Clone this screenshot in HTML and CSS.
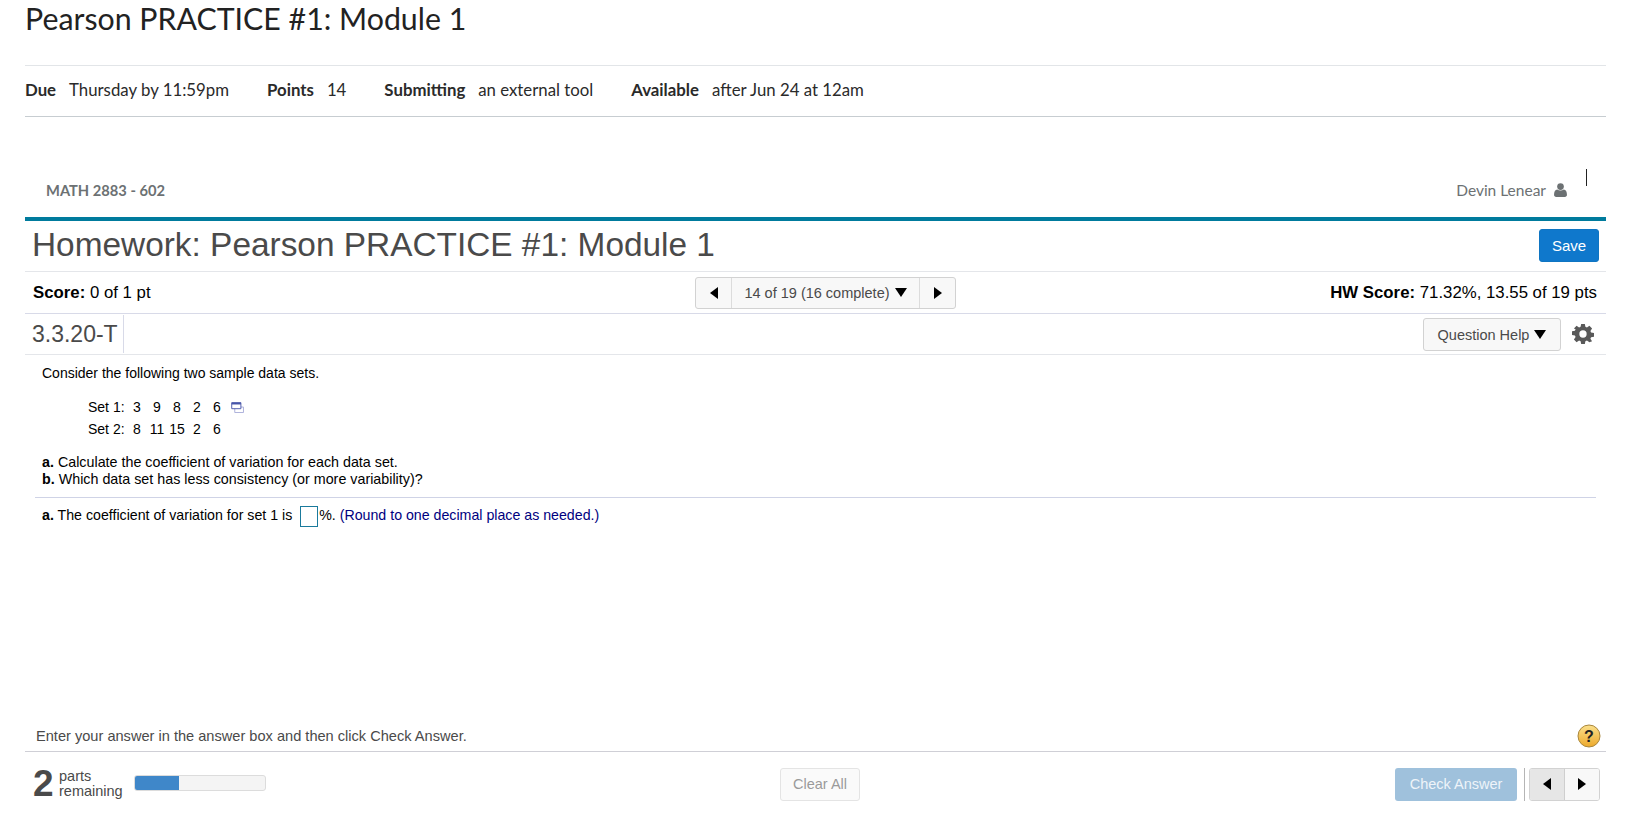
FILE: index.html
```html
<!DOCTYPE html>
<html lang="en">
<head>
<meta charset="utf-8">
<title>Pearson PRACTICE #1: Module 1</title>
<link rel="stylesheet" href="styles.css">
</head>
<body>
<div class="page">
  <h1 class="page-title">Pearson PRACTICE #1: Module 1</h1>
  <ul class="meta">
    <li><b>Due</b><span>Thursday by 11:59pm</span></li>
    <li><b>Points</b><span>14</span></li>
    <li><b>Submitting</b><span>an external tool</span></li>
    <li><b>Available</b><span>after Jun 24 at 12am</span></li>
  </ul>
  <div class="tool">
    <div class="course-row">
      <span class="course">MATH 2883 - 602</span>
      <span class="user">Devin Lenear
        <svg class="user-icon" viewBox="0 0 12 13" aria-hidden="true"><circle cx="6" cy="3.3" r="3.1"/><path d="M0 11c0-3 1-5 3-5 .8.6 1.8 1 3 1s2.200-.4 3-1c2 0 3 2 3 5 0 1.300-.8 2-2 2H2c-1.200 0-2-.7-2-2z"/></svg>
      </span>
      <i class="caret-line"></i>
    </div>
    <div class="hw-row">
      <h2 class="hw-title">Homework: Pearson PRACTICE #1: Module 1</h2>
      <button class="btn-save">Save</button>
    </div>
    <div class="score-row">
      <div class="score"><b>Score:</b> 0 of 1 pt</div>
      <div class="pager">
        <span class="pager-end"><i class="tri-left"></i></span>
        <span class="pager-mid">14 of 19 (16 complete) <i class="tri-down"></i></span>
        <span class="pager-end"><i class="tri-right"></i></span>
      </div>
      <div class="score hw-score"><b>HW Score:</b> 71.32%, 13.55 of 19 pts</div>
    </div>
    <div class="q-row">
      <div class="q-id">3.3.20-T</div>
      <div class="q-tools">
        <button class="btn-help">Question Help <i class="tri-down"></i></button>
        <svg class="gear" viewBox="0 0 24 24" aria-hidden="true"><path fill-rule="evenodd" d="M10 1h4l.6 3.100 1.700.7L19 3l2.900 2.900-1.800 2.700.7 1.700 3.200.7v4l-3.200.6-.7 1.700 1.800 2.700L19 21l-2.700-1.800-1.700.7L14 23h-4l-.6-3.100-1.700-.7L5 21l-2.900-2.900 1.800-2.700-.7-1.700L0 13.100v-4l3.200-.7.7-1.700L2.100 5.900 5 3l2.700 1.800 1.700-.7L10 1zm2 7a4 4 0 1 0 0 8 4 4 0 0 0 0-8z"/></svg>
      </div>
    </div>
    <div class="question">
      <p class="intro">Consider the following two sample data sets.</p>
      <div class="sets">
        <span class="set-label">Set 1:</span><span class="n">3</span><span class="n">9</span><span class="n">8</span><span class="n">2</span><span class="n">6</span>
        <svg class="copy-icon" viewBox="0 0 14 12" aria-hidden="true"><path class="copy-back" d="M4 5.500h9.500v6H4z"/><path class="copy-front" d="M.7.700h10v6.600H.7z"/><path class="copy-bar" d="M.7.700h10v2H.7z"/></svg>
        <span class="set-label">Set 2:</span><span class="n">8</span><span class="n">11</span><span class="n">15</span><span class="n">2</span><span class="n">6</span><span></span>
      </div>
      <p class="parts"><b>a.</b> Calculate the coefficient of variation for each data set.<br><b>b.</b> Which data set has less consistency (or more variability)?</p>
      <div class="answer"><b>a.</b> The coefficient of variation for set 1 is <input class="answer-box" type="text" aria-label="answer">%. <span class="hint">(Round to one decimal place as needed.)</span></div>
    </div>
    <div class="instr-row">
      <span>Enter your answer in the answer box and then click Check Answer.</span>
      <svg class="help-icon" viewBox="0 0 24 24" aria-hidden="true">
        <defs><linearGradient id="gold" x1="0" y1="0" x2="0" y2="1"><stop offset="0" stop-color="#fbe08c"/><stop offset="1" stop-color="#eda92c"/></linearGradient></defs>
        <circle cx="12" cy="12" r="11" fill="url(#gold)" stroke="#a9873d"/>
        <text x="12" y="17.500" text-anchor="middle" class="help-q">?</text>
      </svg>
    </div>
    <div class="action-row">
      <div class="parts-left">
        <span class="big-num">2</span>
        <span class="parts-label">parts<br>remaining</span>
        <span class="progress"><i class="progress-fill"></i></span>
      </div>
      <button class="btn-clear">Clear All</button>
      <div class="actions-right">
        <button class="btn-check">Check Answer</button>
        <i class="sep"></i>
        <div class="nav">
          <span class="nav-prev"><i class="tri-left"></i></span>
          <span class="nav-next"><i class="tri-right"></i></span>
        </div>
      </div>
    </div>
  </div>
</div>
</body>
</html>
```
FILE: styles.css
```css
* { box-sizing: border-box; }
html, body { margin: 0; padding: 0; background: #fff; }
body { font-family: "Liberation Sans", Arial, sans-serif; color: #000; }
.page { width: 1635px; height: 816px; padding: 0 29px 0 25px; overflow: hidden; display: flex; flex-direction: column; }

.page-title { margin: 0; height: 65px; font: 400 30.300px/37px Lato, sans-serif; color: #222; }
.meta { list-style: none; margin: 0; padding: 0 0 2px; height: 52px; display: flex; align-items: center; gap: 38px; border-top: 1px solid #e2e5e8; border-bottom: 1px solid #c7cdd1; font: 400 16.800px/20px Lato, sans-serif; color: #2a2a2a; }
.meta b { font-weight: 700; margin-right: 13px; }

.tool { flex: 1; display: flex; flex-direction: column; min-height: 0; }
.course-row { position: relative; height: 104px; flex: none; display: flex; align-items: flex-end; justify-content: space-between; padding: 0 39px 18px 21px; border-bottom: 4px solid #007b9d; font-family: Lato, sans-serif; color: #6c7173; }
.course { font-size: 14.700px; font-weight: 700; line-height: 18px; }
.user { font-size: 15.500px; line-height: 18px; display: flex; align-items: center; gap: 8px; }
.user-icon { width: 13px; height: 14px; fill: #6c7173; }
.caret-line { position: absolute; right: 19px; top: 52px; width: 1px; height: 17px; background: #222; }

.hw-row { height: 51px; flex: none; display: flex; align-items: center; justify-content: space-between; padding: 0 7px 0 7px; border-bottom: 1px solid #e4e6ea; }
.hw-title { margin: 0 0 3px; font: 400 33.400px/44px "Liberation Sans", Arial, sans-serif; color: #4a4a4a; }
.btn-save { width: 60px; height: 33px; margin-top: -1px; padding: 0; border: 1px solid #0f75c2; border-radius: 3px; background: #0f78cc; color: #fff; font: 400 15px "Liberation Sans", Arial, sans-serif; }

.score-row { height: 42px; flex: none; display: grid; grid-template-columns: 1fr auto 1fr; align-items: center; padding: 0 9px 0 8px; border-bottom: 1px solid #d8dae8; font-size: 16.800px; }
.hw-score { text-align: right; }
.pager { display: flex; height: 32px; margin-left: 21px; border: 1px solid #d2d2d2; border-radius: 3px; background: #f8f8f8; color: #4a4a4a; font-size: 14.500px; }
.pager-end { width: 35px; display: flex; align-items: center; justify-content: center; }
.pager-mid { width: 189px; display: flex; align-items: center; justify-content: center; gap: 5px; border: solid #dcdcdc; border-width: 0 1px; }

.tri-left, .tri-right { display: block; width: 0; height: 0; border-style: solid; border-color: transparent #000; }
.tri-left { border-width: 6px 8px 6px 0; }
.tri-right { border-width: 6px 0 6px 8px; }
.tri-down { display: inline-block; width: 0; height: 0; border-style: solid; border-color: #000 transparent transparent; border-width: 9px 6.500px 0; }

.q-row { height: 41px; flex: none; display: flex; align-items: stretch; justify-content: space-between; border-bottom: 1px solid #e4e6ea; padding: 1px 12px 0 0; }
.q-id { width: 99px; padding-left: 7px; margin-bottom: 1px; border-right: 1px solid #d8dae8; font-size: 23px; line-height: 38px; color: #4a4a4a; white-space: nowrap; }
.q-tools { display: flex; align-items: center; gap: 11px; margin-top: -1px; }
.btn-help { width: 138px; height: 33px; margin-top: 1px; display: flex; align-items: center; justify-content: center; gap: 5px; padding: 0; border: 1px solid #d2d2d2; border-radius: 3px; background: #f8f8f8; color: #4a4a4a; font: 400 14.500px "Liberation Sans", Arial, sans-serif; }
.gear { width: 22px; height: 22px; fill: #595959; }

.question { flex: 1; padding: 0 10px 0 17px; font-size: 14px; line-height: 17px; }
.intro { margin: 10px 0 0; }
.sets { margin: 14px 0 0 46px; display: grid; grid-template-columns: 39px repeat(5, 20px) 20px; grid-auto-rows: 22px; align-items: center; }
.n { text-align: center; }
.copy-icon { width: 13px; height: 11px; margin-left: 4px; fill: none; }
.copy-back { stroke: #a5aad8; }
.copy-front { stroke: #4654a8; fill: #fff; }
.copy-bar { fill: #4654a8; }
.parts { margin: 14px 0 0; font-size: 14.300px; }
.answer { margin: 9px 0 0 -7px; padding: 8px 0 0 7px; border-top: 1px solid #cfd3e6; display: block; white-space: nowrap; font-size: 14.200px; }
.answer-box { width: 18px; height: 21px; padding: 0; margin: 0 1px 0 4px; border: 1px solid #1a7a9c; vertical-align: middle; background: #fff; }
.hint { color: #000080; }

.instr-row { height: 35px; flex: none; display: flex; align-items: center; justify-content: space-between; padding: 4px 5px 0 11px; border-bottom: 1px solid #cfcfd6; font-size: 14.600px; color: #4a4a4a; }
.help-icon { width: 24px; height: 24px; }
.help-q { font: 700 16px "Liberation Sans", Arial, sans-serif; fill: #222; }

.action-row { height: 64px; flex: none; display: grid; grid-template-columns: 1fr auto 1fr; align-items: center; padding: 0 6px 0 8px; }
.parts-left { display: flex; align-items: center; }
.big-num { font-size: 37px; font-weight: 700; line-height: 40px; color: #4a4a4a; width: 26px; }
.parts-label { font-size: 14.500px; line-height: 15px; color: #4a4a4a; width: 75px; }
.progress { display: block; width: 132px; height: 16px; margin-top: -2px; border: 1px solid #dcdcdc; border-radius: 3px; background: #f4f4f4; overflow: hidden; }
.progress-fill { display: block; width: 44px; height: 100%; background: #3f87c9; }
.btn-clear { width: 80px; height: 33px; margin-left: 7px; padding: 0; border: 1px solid #e4e4e4; border-radius: 3px; background: #fafafa; color: #9a9a9a; font: 400 14.500px "Liberation Sans", Arial, sans-serif; }
.actions-right { display: flex; align-items: center; justify-content: flex-end; }
.btn-check { width: 122px; height: 33px; padding: 0; border: 0; border-radius: 3px; background: #9fc1dc; color: #eef4f9; font: 400 14.500px "Liberation Sans", Arial, sans-serif; }
.sep { display: block; width: 1px; height: 33px; margin: 0 4px 0 7px; background: #b5b5b5; }
.nav { display: flex; width: 71px; height: 33px; border: 1px solid #d2d2d2; border-radius: 3px; overflow: hidden; }
.nav-prev, .nav-next { flex: 1; display: flex; align-items: center; justify-content: center; }
.nav-prev { background: #e6e6e6; border-right: 1px solid #cfcfcf; }
.nav-next { background: #f8f8f8; }
```
